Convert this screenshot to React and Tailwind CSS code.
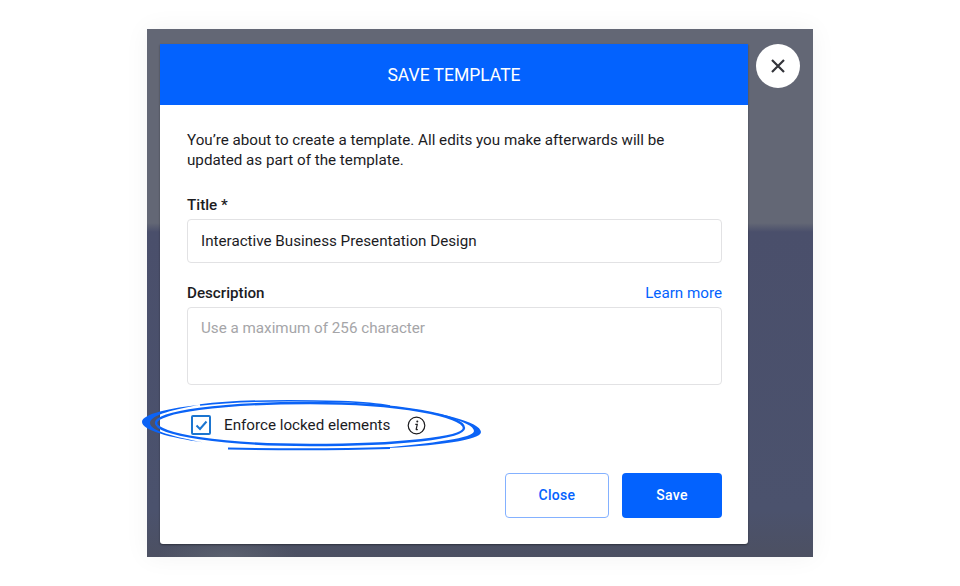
import React from "react";

function Scribble() {
  return (
    <svg className="absolute left-[140px] top-[398px] pointer-events-none" width="345" height="54" viewBox="0 0 345 54" fill="none">
      <path d="M62 6.5C30 10 2 16 2 24C2 32 30 40 64 44.5C35 39 10 33 10 25C10 17 35 11 62 6.5Z" fill="#0b63f6" />
      <path d="M16 25C16 14 80 5 170 5C260 5 324 18 324 30C324 40 260 47 170 47C80 47 16 36 16 25Z" stroke="#0b63f6" strokeWidth="2.4" />
      <path d="M60 7C100 2 150 2 200 3.5C225 4.5 240 6 250 8" stroke="#0b63f6" strokeWidth="1.6" />
      <path d="M250 8C300 14 341 24 341 34C341 42 300 48 235 50.5C295 45 334 40 334 33C334 24 295 14 250 8Z" fill="#0b63f6" />
      <path d="M88 50.5C140 51.5 200 51.5 250 50" stroke="#0b63f6" strokeWidth="2" />
    </svg>
  );
}

export default function App() {
  return (
    <div className="relative w-[960px] h-[586px] bg-white overflow-hidden font-['Roboto',sans-serif]">
      <div className="ml-[147px] mt-[29px] inline-block align-top w-[666px] h-[528px] px-[13px] pt-[15px] shadow-[0_0_24px_rgba(0,0,0,0.05)] bg-[radial-gradient(ellipse_70px_20px_at_80px_528px,#5b616f,transparent),linear-gradient(180deg,#636775_0,#636775_194px,#4a4f6b_203px,#4b526d_480px,#4c5062_528px)]">
        <div className="w-[588px] h-[500px] bg-white rounded-b-[3px] shadow-[0_1px_2px_rgba(0,0,0,0.4)] flex flex-col">
          <div className="h-[61px] pt-[1px] shrink-0 bg-[#0362fe] flex items-center justify-center text-white text-[17.5px]">
            SAVE TEMPLATE
          </div>
          <div className="flex-1 pl-[27px] pr-[26px] pt-[25px] flex flex-col text-[15.2px] text-[#1c1c1f]">
            <p className="leading-[20px] w-[500px]">
              You’re about to create a template. All edits you make afterwards will be updated as part of the template.
            </p>
            <div className="mt-[25px]">
              <div className="h-[20px] mb-[4px] leading-[20px] font-medium">Title *</div>
              <div className="h-[44px] border border-[#e2e2e4] rounded-[4px] px-[13px] flex items-center">
                Interactive Business Presentation Design
              </div>
            </div>
            <div className="mt-[20px]">
              <div className="flex justify-between h-[20px] mb-[4px] leading-[20px]">
                <span className="font-medium">Description</span>
                <a className="text-[#0362fe]">Learn more</a>
              </div>
              <div className="h-[78px] border border-[#e2e2e4] rounded-[4px] px-[13px] pt-[10px] leading-[20px] text-[#a5a5a8]">
                Use a maximum of 256 character
              </div>
            </div>
            <div className="mt-[30px] ml-[4px] flex items-center h-[20px]">
              <span className="w-[20px] h-[20px] border-2 border-[#1b75d0] rounded-[2px] flex items-center justify-center">
                <svg width="13" height="11" viewBox="0 0 13 11" fill="none">
                  <path d="M1.5 5.5L5 9L11.5 1.5" stroke="#1b75d0" strokeWidth="2" />
                </svg>
              </span>
              <span className="ml-[13px]">Enforce locked elements</span>
              <svg className="ml-[17px]" width="19" height="19" viewBox="0 0 19 19" fill="none">
                <circle cx="9.5" cy="9.5" r="8.3" stroke="#1c1c1f" strokeWidth="1.2" />
                <circle cx="10.3" cy="5.6" r="1" fill="#1c1c1f" />
                <path d="M8.3 8.3H10.3L9.2 13.2Q9.1 14 10.8 13.4" stroke="#1c1c1f" strokeWidth="1.2" />
              </svg>
            </div>
            <div className="mt-[38px] flex justify-end gap-[13px]">
              <button className="w-[104px] h-[45px] border border-[#84b1ff] rounded-[4px] bg-white text-[#0362fe] text-[14px] font-medium tracking-[0.3px]">Close</button>
              <button className="w-[100px] h-[45px] rounded-[4px] bg-[#0362fe] text-white text-[14px] font-medium tracking-[0.3px]">Save</button>
            </div>
          </div>
        </div>
      </div>
      <button className="absolute left-[756px] top-[44px] w-[44px] h-[44px] rounded-full bg-white flex items-center justify-center">
        <svg width="16" height="16" viewBox="0 0 16 16" fill="none">
          <path d="M2 2L14 14M14 2L2 14" stroke="#33343a" strokeWidth="2.2" />
        </svg>
      </button>
      <Scribble />
    </div>
  );
}
